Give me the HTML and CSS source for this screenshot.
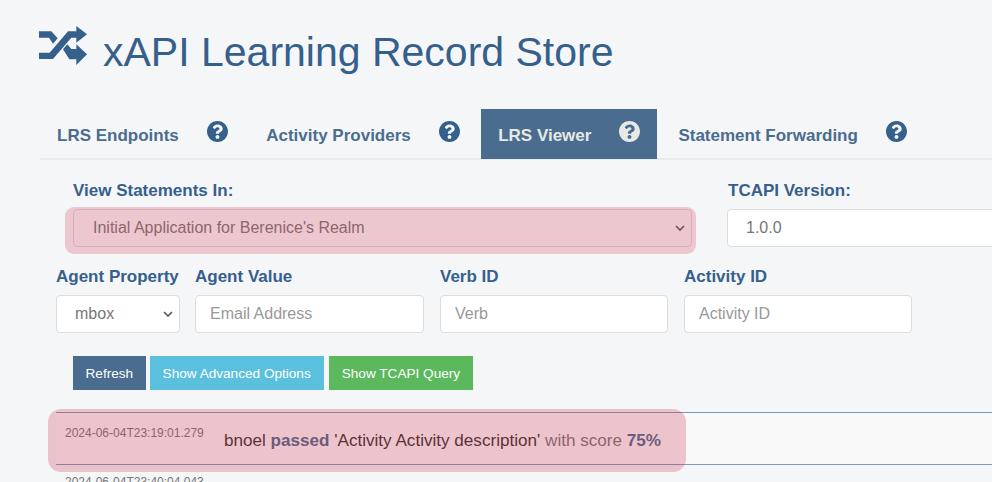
FILE: index.html
```html
<!DOCTYPE html>
<html lang="en">
<head>
<meta charset="utf-8">
<title>xAPI Learning Record Store</title>
<link rel="stylesheet" href="styles.css">
</head>
<body>
<div class="page">
  <header class="title-row">
    <svg class="logo" viewBox="28 17 144 117" aria-hidden="true"><path d="M28 33H65L84 54 70 70 58 52H28ZM100 87 113 72 125 86H140V72L172 102 140 134V117H119ZM28 97H60L115 33H140V17L172 42 140 67V52H125L70 116H28Z"/></svg>
    <h1 class="title">xAPI Learning Record Store</h1>
  </header>
  <nav class="tabs">
    <a class="tab">LRS Endpoints<svg class="help" viewBox="8 8 496 496"><use href="#q"/></svg></a>
    <a class="tab">Activity Providers<svg class="help" viewBox="8 8 496 496"><use href="#q"/></svg></a>
    <a class="tab active">LRS Viewer<svg class="help" viewBox="8 8 496 496"><use href="#q"/></svg></a>
    <a class="tab">Statement Forwarding<svg class="help" viewBox="8 8 496 496"><use href="#q"/></svg></a>
  </nav>
  <svg class="defs" aria-hidden="true"><defs><path id="q" fill-rule="evenodd" d="M504 256c0 136.997-111.043 248-248 248S8 392.997 8 256C8 119.083 119.043 8 256 8s248 111.083 248 248zM262.655 90c-54.497 0-89.255 22.957-116.549 63.758-3.536 5.286-2.353 12.415 2.715 16.258l34.699 26.31c5.205 3.947 12.621 3.008 16.665-2.122 17.864-22.658 30.113-35.797 57.303-35.797 20.429 0 45.698 13.148 45.698 32.958 0 14.976-12.363 22.667-32.534 33.976C247.128 238.528 216 254.941 216 296v4c0 6.627 5.373 12 12 12h56c6.627 0 12-5.373 12-12v-1.333c0-28.462 83.186-29.647 83.186-106.667 0-58.002-60.165-102-116.531-102zM256 338c-25.365 0-46 20.635-46 46 0 25.364 20.635 46 46 46s46-20.636 46-46c0-25.365-20.635-46-46-46z"/></defs></svg>

  <section class="row-top">
    <div class="field field-app">
      <label class="label">View Statements In:</label>
      <div class="control select-box"><span>Initial Application for Berenice's Realm</span><svg class="chev" viewBox="0 0 10 6"><path d="M1 1l4 4 4-4"/></svg></div>
    </div>
    <div class="field field-version">
      <label class="label">TCAPI Version:</label>
      <input class="control version" value="1.0.0">
    </div>
  </section>

  <section class="row-filters">
    <div class="field field-prop">
      <label class="label">Agent Property</label>
      <div class="control select-box mbox"><span>mbox</span><svg class="chev" viewBox="0 0 10 6"><path d="M1 1l4 4 4-4"/></svg></div>
    </div>
    <div class="field field-val">
      <label class="label">Agent Value</label>
      <input class="control" placeholder="Email Address">
    </div>
    <div class="field field-val">
      <label class="label">Verb ID</label>
      <input class="control" placeholder="Verb">
    </div>
    <div class="field field-val">
      <label class="label">Activity ID</label>
      <input class="control" placeholder="Activity ID">
    </div>
  </section>

  <section class="buttons">
    <button class="btn btn-primary">Refresh</button>
    <button class="btn btn-info">Show Advanced Options</button>
    <button class="btn btn-success">Show TCAPI Query</button>
  </section>

  <section class="statements">
    <div class="statement">
      <span class="stamp">2024-06-04T23:19:01.279</span>
      <span class="sentence">bnoel <b class="verb">passed</b> 'Activity Activity description' <span class="soft">with score</span> <b class="score">75%</b></span>
    </div>
    <div class="statement">
      <span class="stamp">2024-06-04T23:40:04.043</span>
      <span class="sentence">bnoel <b class="verb">failed</b> 'Activity Activity description' <span class="soft">with score</span> <b class="score">0%</b></span>
    </div>
  </section>

  <div class="mark mark-select"></div>
  <div class="mark mark-statement"></div>
</div>
</body>
</html>
```

FILE: styles.css
```css
* { box-sizing: border-box; }
html, body { margin: 0; height: 100%; overflow: hidden; }
body { background: #f5f6f8; font-family: "Liberation Sans", Arial, sans-serif; color: #333; }
.page { position: relative; width: 992px; height: 482px; overflow: hidden; }
.defs { display: none; }

.title-row { display: flex; align-items: flex-start; padding: 26px 0 0 39px; height: 109px; }
.logo { width: 48px; height: 39px; fill: #36608c; flex: none; }
.title { margin: 2px 0 0 16px; font-size: 41px; line-height: 48px; font-weight: 400; color: #36608c; white-space: nowrap; }

.tabs { display: flex; gap: 4px; margin-left: 40px; height: 51px; border-bottom: 2px solid #e8eaed; }
.tab { display: flex; align-items: flex-start; height: 50px; padding: 16px 17px 0; font-size: 17px; line-height: 22px; font-weight: 700; color: #4a6d8f; white-space: nowrap; }
.tab.active { background: #4a6d8f; color: #e8e8e4; }
.help { width: 21px; height: 21px; margin-left: 28.4px; margin-top: -4px; fill: #36608c; flex: none; }
.active .help { fill: #e8e8e4; margin-left: 28px; }

.label { display: block; font-size: 17px; line-height: 20px; font-weight: 700; color: #36608c; white-space: nowrap; }
.control { display: flex; align-items: center; justify-content: space-between; width: 100%; height: 38px; background: #fff; border: 1px solid #ddd; border-radius: 4px; font: 16px "Liberation Sans", Arial, sans-serif; color: #777; padding: 0 14px; outline: none; }
.control::placeholder { color: #999; opacity: 1; }
.field .label { margin-bottom: 8px; }

.row-top { display: flex; padding: 21px 0 0 73px; gap: 35px; }
.field-app { width: 619px; flex: none; }
.field-app .select-box { padding: 0 6px 0 19px; background: #f5f6f8; border-color: #d8d8d8; }
.field-version { width: 400px; flex: none; }
.field-version .label { padding-left: 1px; }
.version { padding-left: 18px; }

.row-filters { display: flex; padding: 20px 0 0 56px; gap: 16px; }
.field-prop { width: 124px; flex: none; margin-right: -1px; }
.field-prop + .field-val { width: 229px; }
.mbox { padding: 0 6px 0 18px; }
.field-val { width: 228px; flex: none; }
.chev { width: 10px; height: 6px; fill: none; stroke: #555; stroke-width: 1.6; flex: none; }

.buttons { display: flex; gap: 4px; padding: 23px 0 0 73px; }
.btn { height: 34px; padding: 0 12px; border: 1px solid transparent; font: 13.6px "Liberation Sans", Arial, sans-serif; color: #fff; white-space: nowrap; }
.btn-primary { background: #4a6d8f; padding: 0 11.5px; }
.btn-info { background: #5bc0de; }
.btn-success { background: #5cb85c; margin-left: 1px; }

.statements { margin: 22px 0 0 56px; border-top: 1px solid #7d9ab8; }
.statement { display: flex; align-items: flex-start; height: 52px; padding: 13px 0 0 9px; background: #f9f9f9; border-bottom: 1px solid #7d9ab8; }
.statement + .statement { padding-top: 10px; background: #f5f6f8; }
.stamp { width: 159px; flex: none; font-size: 12px; line-height: 14px; color: #777; }
.sentence { font-size: 17.1px; line-height: 24px; margin-top: 3px; color: #333; white-space: nowrap; }
.verb { color: #4a6d8f; }
.soft { color: #777; }
.score { color: #4a6d8f; }

.mark { position: absolute; }
.mark-select { left: 65px; top: 207px; width: 631px; height: 47px; border-radius: 9px; background: rgba(215, 50, 80, 0.24); }
.mark-statement { left: 48px; top: 409px; width: 638px; height: 63px; border-radius: 13px; background: rgba(205, 45, 75, 0.26); }
```
